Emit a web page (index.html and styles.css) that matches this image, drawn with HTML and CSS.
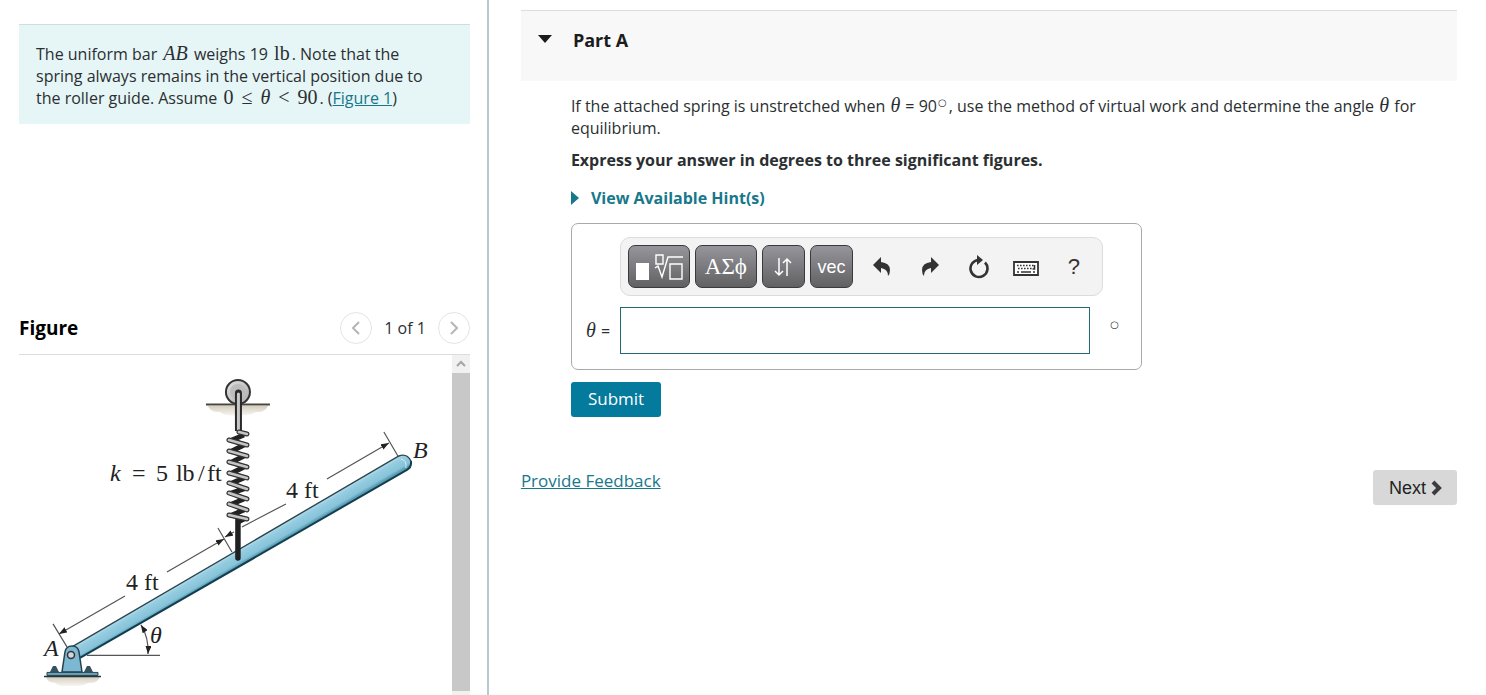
FILE: index.html
```html
<!DOCTYPE html>
<html lang="en">
<head>
<meta charset="utf-8">
<meta name="viewport" content="width=device-width, initial-scale=1">
<title>Part A</title>
<link rel="stylesheet" href="styles.css">
</head>
<body>
<div class="page">
  <aside class="side">
    <section class="problem">
      <p>The uniform bar <span class="math"><i>AB</i></span> weighs 19 <span class="math">lb</span>. Note that the spring always remains in the vertical position due to the roller guide. Assume <span class="math expr"><span>0</span><span>≤</span><i>θ</i><span>&lt;</span><span>90</span></span>. (<a href="#figure">Figure 1</a>)</p>
    </section>
    <section class="figure" id="figure">
      <header class="figure-head">
        <h2>Figure</h2>
        <nav class="pager" aria-label="Figures">
          <button type="button" aria-label="Previous figure"><svg width="12" height="16" viewBox="0 0 12 16"><path d="M9 2 3 8l6 6" fill="none" stroke="#b5b5b5" stroke-width="2"/></svg></button>
          <span>1 of 1</span>
          <button type="button" aria-label="Next figure"><svg width="12" height="16" viewBox="0 0 12 16"><path d="m3 2 6 6-6 6" fill="none" stroke="#b5b5b5" stroke-width="2"/></svg></button>
        </nav>
      </header>
      <div class="figure-body">
        <svg class="diagram" viewBox="19 355 433 340" role="img" aria-label="Bar AB on a pin at A, held by a vertical spring at its middle">
          <defs>
            <linearGradient id="bar" gradientUnits="userSpaceOnUse" x1="236" y1="551" x2="243" y2="563">
              <stop offset="0" stop-color="#b9deeb"/><stop offset=".25" stop-color="#96cde1"/><stop offset=".8" stop-color="#86c3d9"/><stop offset="1" stop-color="#5b9cb3"/>
            </linearGradient>
            <linearGradient id="wheel" x1="0" y1="0" x2="1" y2="1"><stop offset="0" stop-color="#e2e2e2"/><stop offset="1" stop-color="#adadad"/></linearGradient>
            <linearGradient id="ground" x1="0" y1="0" x2="0" y2="1"><stop offset="0" stop-color="#d5cfc0"/><stop offset="1" stop-color="#f8f6f1"/></linearGradient>
            <marker id="tip" viewBox="0 0 8 6" refX="8" refY="3" markerWidth="8" markerHeight="6" markerUnits="userSpaceOnUse" orient="auto-start-reverse"><path d="M0 0 8 3 0 6z" fill="#222"/></marker>
          </defs>
          <path d="M208 406h60q-3 7-12 6-8 4-18 3-12 2-18-3-9 1-12-6z" fill="url(#ground)"/>
          <circle cx="238" cy="392" r="12" fill="url(#wheel)" stroke="#333" stroke-width="2"/>
          <circle cx="238" cy="392" r="8" fill="#bdbdbd"/>
          <path d="M206 404.500h64" stroke="#4a463c" stroke-width="2"/>
          <path d="M235 431v-38a3.500 3.500 0 0 1 7 0v38z" fill="#2a2a2a"/>
          <path d="M238.500 432v-38" stroke="#c7c7c7" stroke-width="3" stroke-linecap="round"/>
          <path d="M46 677h54q-3 7-12 6-8 4-18 3-10 1-15-3-7 0-9-6z" fill="url(#ground)"/>
          <path d="M72 647 399 456q8-3 12 5 1 6-4 9L80 658z" fill="url(#bar)"/>
          <path d="M72 647 399 456q8-3 12 5" fill="none" stroke="#2b4550" stroke-width="1.400"/>
          <path d="M411 461q1 6-4 9L80 658" fill="none" stroke="#123f50" stroke-width="2"/>
          <path d="M401 459q6 1 5 9" fill="none" stroke="#d8eef5" stroke-width="1"/>
          <path d="M238 520v38" stroke="#202020" stroke-width="5.500" stroke-linecap="round"/>
          <path d="M244 435 232 440 244 445 232 451 244 456 232 462 244 467 232 473 244 478 232 483 244 489 232 493 244 499 232 504 244 510 232 515 244 519 238 522" fill="none" stroke="#222" stroke-width="5" stroke-linejoin="round"/>
          <g fill="none" stroke-linecap="round">
            <g stroke="#333" stroke-width="5">
              <path d="M239 432 247 434M229 440 247 445M229 451 247 456M229 462 247 467M229 473 247 478M229 483 247 489M229 493 247 499M229 504 247 510M229 515 247 519"/>
            </g>
            <path d="M239 432 247 434M229 440 247 445M229 451 247 456M229 462 247 467M229 473 247 478M229 483 247 489M229 493 247 499M229 504 247 510M229 515 247 519" stroke="#c4c4c4" stroke-width="2.600"/>
          </g>
          <g stroke="#555" stroke-width="1.200" fill="none">
            <path d="M384 432 398 456M218 528 232 552M53 624 67 647"/>
            <path d="M327 479 389 443" marker-end="url(#tip)"/>
            <path d="M286 504 242 527"/>
            <path d="M234 532 225 537" marker-end="url(#tip)"/>
            <path d="M167 572 224 539" marker-end="url(#tip)"/>
            <path d="M125 596 59 634" marker-end="url(#tip)"/>
            <path d="M87 655.500h73"/>
            <path d="M141 625q8 13 7 29" marker-start="url(#tip)" marker-end="url(#tip)"/>
          </g>
          <path d="M65 652q1-6 7-6t7 6l3 20H62z" fill="#7db8d2" stroke="#27424f" stroke-width="1.500"/>
          <circle cx="71" cy="655" r="3.500" fill="#cfd8dc" stroke="#333" stroke-width="1.500"/>
          <path d="M50 672l3-6h3l3 6zM84 672l3-6h3l3 6z" fill="#36525e"/>
          <path d="M47 672.500h51v3H47z" fill="#6ba3ba" stroke="#27424f"/>
          <path d="M44 676.500h57" stroke="#27343a" stroke-width="1.500"/>
          <g class="labels">
            <text y="481"><tspan x="110" font-style="italic">k</tspan><tspan x="132">=</tspan><tspan x="156">5</tspan><tspan x="176">lb</tspan><tspan x="198">/</tspan><tspan x="207">ft</tspan></text>
            <text x="286" y="498">4 ft</text>
            <text x="126" y="590">4 ft</text>
            <text x="413" y="458" font-style="italic">B</text>
            <text x="44" y="656" font-style="italic">A</text>
            <text x="150" y="643" font-style="italic">θ</text>
          </g>
        </svg>
        <div class="scrollbar" aria-hidden="true">
          <span class="scroll-up"><svg width="10" height="8" viewBox="0 0 10 8"><path d="M1 6l4-4 4 4" fill="none" stroke="#a5a5a5" stroke-width="2"/></svg></span>
          <span class="scroll-thumb"></span>
        </div>
      </div>
    </section>
  </aside>
  <main class="main">
    <header class="part">
      <svg width="14" height="8" viewBox="0 0 14 8"><path d="M0 0h14L7 8z" fill="#1c1c1c"/></svg>
      <h1>Part A</h1>
    </header>
    <div class="content">
      <p>If the attached spring is unstretched when <span class="math"><i>θ</i></span> = 90<sup>○</sup>, use the method of virtual work and determine the angle <span class="math"><i>θ</i></span> for equilibrium.</p>
      <p class="strong">Express your answer in degrees to three significant figures.</p>
      <button type="button" class="hints"><svg width="8" height="14" viewBox="0 0 8 14"><path d="M0 0l8 7-8 7z" fill="#17788b"/></svg>View Available Hint(s)</button>
      <form class="answer">
        <div class="toolbar">
          <button type="button" class="key wide" aria-label="Templates"><svg width="48" height="30" viewBox="0 0 48 30"><path d="M1 11h13v17H1z" fill="#fff"/><path d="M21 3h7v9h-7zM35 12h12v15H35zM20 16l3-2 4 11 6-20h15" fill="none" stroke="#fff" stroke-width="1.400"/></svg></button>
          <button type="button" class="key wide greek">ΑΣϕ</button>
          <button type="button" class="key" aria-label="Sub and superscript"><svg width="18" height="20" viewBox="0 0 18 20"><path d="M5 1v17M1 14l4 4 4-4M13 19V2M9 6l4-4 4 4" fill="none" stroke="#fff" stroke-width="1.500"/></svg></button>
          <button type="button" class="key">vec</button>
          <div class="tools">
            <button type="button" aria-label="Undo"><svg width="18" height="20" viewBox="0 0 18 20"><path d="M0 8 8 0v5q9 1 9 8 0 4-2 6 0-7-7-8v5z" fill="#333"/></svg></button>
            <button type="button" aria-label="Redo"><svg width="18" height="20" viewBox="0 0 18 20"><path d="M18 8 10 0v5q-9 1-9 8 0 4 2 6 0-7 7-8v5z" fill="#333"/></svg></button>
            <button type="button" aria-label="Reset"><svg width="22" height="24" viewBox="0 0 22 24"><path d="M12 5a8.500 8.500 0 1 0 6 2.500" fill="none" stroke="#333" stroke-width="2.600"/><path d="M10 0l6 5-6 5z" fill="#333"/></svg></button>
            <button type="button" aria-label="Keyboard"><svg class="keyboard" width="26" height="16" viewBox="0 0 26 16"><path d="M1 1h24v13H1z" fill="#fff" stroke="#333" stroke-width="1.800"/><path d="M4 4.500h18M5 7.500h14" stroke="#333" stroke-width="1.600" stroke-dasharray="1.600 1.400"/><path d="M4 11h2M8 11h10M20 11h2M21.500 4v4h-2" fill="none" stroke="#333" stroke-width="1.600"/></svg></button>
            <button type="button" class="help" aria-label="Help">?</button>
          </div>
        </div>
        <label for="theta"><span class="math"><i>θ</i></span> =</label>
        <input id="theta" type="text">
        <span class="unit">○</span>
      </form>
      <button type="button" class="submit">Submit</button>
    </div>
    <footer class="foot">
      <a href="#feedback">Provide Feedback</a>
      <button type="button" class="next">Next <svg width="11" height="16" viewBox="0 0 11 16"><path d="M2 2l6 6-6 6" fill="none" stroke="#3c3c3c" stroke-width="4"/></svg></button>
    </footer>
  </main>
</div>
</body>
</html>
```
FILE: styles.css
```css
* { box-sizing: border-box; }
body {
  margin: 0;
  background: #fff;
  color: #2b2f31;
  font: 16px/22px "Comic Sans MS", "Open Sans", sans-serif;
}
h1, h2, p { margin: 0; }
button { font: inherit; color: inherit; border: 0; padding: 0; background: none; cursor: pointer; }
svg { display: block; flex: none; }
a { color: #17788b; }

.page { display: grid; grid-template-columns: 32.9% 1fr; min-height: 100vh; }
.side {
  display: flex;
  flex-direction: column;
  padding: 24px 17px 0 19px;
  border-right: 2px solid #b9c8cd;
}
.problem {
  padding: 18px 32px 15px 17px;
  background: #e6f5f6;
  border-top: 1px solid #cfdddf;
}
.math { font-family: "Liberation Serif", serif; font-size: 20px; line-height: 1; }
.problem .math { margin: 0 2px; }
.expr { display: inline-flex; gap: 8px; }

.figure { display: flex; flex-direction: column; flex: 1; margin-top: 184px; }
.figure-head {
  display: flex;
  align-items: center;
  justify-content: space-between;
  height: 47px;
  padding: 0 0 6px;
  border-bottom: 1px solid #dcdcdc;
}
h2 { font-size: 19px; line-height: 24px; color: #000; }
.pager { display: flex; align-items: center; gap: 12px; }
.pager button {
  display: grid;
  place-items: center;
  width: 32px;
  height: 32px;
  border: 1px solid #e4e4e4;
  border-radius: 50%;
}
.figure-body { display: flex; flex: 1; align-items: stretch; }
.diagram { flex: 1; min-width: 0; height: auto; align-self: flex-start; }
.labels { font: 24px "Liberation Serif", serif; fill: #222; }
.scrollbar { display: flex; flex-direction: column; width: 18px; padding-bottom: 4px; background: #f1f1f1; }
.scroll-up { display: grid; place-items: center; height: 18px; }
.scroll-thumb { flex: 1; background: #c8c8c8; }

.main { padding: 10px 29px 0 32px; }
.part {
  display: flex;
  align-items: flex-start;
  gap: 21px;
  height: 71px;
  padding: 18px 17px;
  background: #f8f8f8;
  border-top: 1px solid #dedede;
}
.part svg { margin-top: 6px; }
h1 { font-size: 18px; line-height: 22px; color: #1c1c1c; }
.content { padding: 14px 0 0 50px; }
.content .math { margin: 0 1px; }
.content sup { margin: 0 2px 0 1px; font: 14px/0 "DejaVu Sans", sans-serif; font-size: 10px; }
.strong { margin-top: 10px; font-weight: 700; }
.hints {
  display: flex;
  align-items: center;
  gap: 12px;
  margin-top: 16px;
  color: #17788b;
  font-weight: 700;
}
.answer {
  display: grid;
  grid-template-columns: 35px minmax(0, 470px) 1fr;
  align-items: center;
  row-gap: 11px;
  max-width: 571px;
  margin-top: 14px;
  padding: 13px 16px 15px 13px;
  border: 1px solid #a9a9a9;
  border-radius: 7px;
}
.toolbar {
  grid-column: 2 / 4;
  display: flex;
  gap: 5px;
  max-width: 483px;
  padding: 7px 0 7px 7px;
  background: #f3f3f3;
  border: 1px solid #dcdcdc;
  border-radius: 10px;
}
.key {
  display: grid;
  place-items: center;
  flex: none;
  width: 43px;
  height: 43px;
  border: 1px solid #3a3a3c;
  border-radius: 7px;
  background: linear-gradient(#96959b, #616163);
  color: #fff;
  font: 18px/22px "Liberation Sans", sans-serif;
}
.wide { width: 62px; }
.greek { font: 23px/26px "Liberation Serif", serif; }
.tools { display: flex; }
.tools button { display: grid; place-items: center; width: 48px; height: 43px; }
.tools .keyboard { margin-top: 4px; }
.tools .help { font: 22px/24px "Liberation Sans", sans-serif; color: #333; }
.answer label { white-space: nowrap; }
.answer input {
  width: 100%;
  height: 47px;
  padding: 0 10px;
  border: 1px solid #23697c;
  font: inherit;
}
.unit { padding: 0 6px 12px 0; font-family: "DejaVu Sans", sans-serif; font-size: 10px; text-align: right; }
.submit {
  display: block;
  margin-top: 12px;
  padding: 6px 17px 7px;
  border-radius: 3px;
  background: #047a9c;
  color: #fff;
  font-size: 17px;
}
.foot { display: flex; justify-content: space-between; align-items: flex-start; margin-top: 53px; font-size: 17px; }
.next {
  display: flex;
  align-items: center;
  gap: 5px;
  height: 35px;
  padding: 0 15px 0 16px;
  border-radius: 3px;
  background: #d8d8d8;
  color: #222;
  font: 18px/22px "Liberation Sans", sans-serif;
}
```
